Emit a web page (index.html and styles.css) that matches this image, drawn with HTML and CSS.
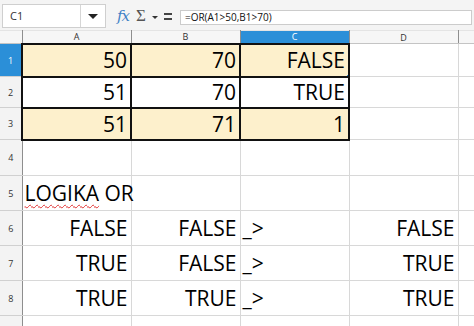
FILE: index.html
```html
<!DOCTYPE html>
<html>
<head>
<meta charset="utf-8">
<link rel="stylesheet" href="styles.css">
</head>
<body>
<div class="toolbar">
  <div class="namebox">
    <span class="name">C1</span>
    <span class="nb-drop"><span class="tri"></span></span>
  </div>
  <span class="fx">fx</span>
  <span class="sigma">Σ</span>
  <span class="tri tri-small"></span>
  <span class="eq"><i></i><i></i></span>
  <div class="formula">=OR(A1&gt;50,B1&gt;70)</div>
</div>
<table class="sheet">
  <colgroup>
    <col class="c-rh"><col class="c-col"><col class="c-col"><col class="c-col"><col class="c-col"><col class="c-rest">
  </colgroup>
  <tr class="hdr">
    <th class="corner"></th><th>A</th><th>B</th><th class="sel">C</th><th>D</th><th></th>
  </tr>
  <tr class="r1">
    <th class="rh sel">1</th><td class="b y num">50</td><td class="b y num">70</td><td class="b y num cur">FALSE</td><td></td><td></td>
  </tr>
  <tr class="r2">
    <th class="rh">2</th><td class="b num">51</td><td class="b num">70</td><td class="b num">TRUE</td><td></td><td></td>
  </tr>
  <tr class="r3">
    <th class="rh">3</th><td class="b y num">51</td><td class="b y num">71</td><td class="b y num">1</td><td></td><td></td>
  </tr>
  <tr class="r4">
    <th class="rh">4</th><td></td><td></td><td></td><td></td><td></td>
  </tr>
  <tr class="rn">
    <th class="rh">5</th><td class="txt over"><span class="sp">LOGIKA</span> OR</td><td></td><td></td><td></td><td></td>
  </tr>
  <tr class="rn">
    <th class="rh">6</th><td class="num">FALSE</td><td class="num">FALSE</td><td class="txt">_&gt;</td><td class="num">FALSE</td><td></td>
  </tr>
  <tr class="rn">
    <th class="rh">7</th><td class="num">TRUE</td><td class="num">FALSE</td><td class="txt">_&gt;</td><td class="num">TRUE</td><td></td>
  </tr>
  <tr class="rn">
    <th class="rh">8</th><td class="num">TRUE</td><td class="num">TRUE</td><td class="txt">_&gt;</td><td class="num">TRUE</td><td></td>
  </tr>
  <tr class="rn">
    <th class="rh"></th><td></td><td></td><td></td><td></td><td></td>
  </tr>
</table>
</body>
</html>
```
FILE: styles.css
```css
html, body {
  margin: 0;
  padding: 0;
  background: #ffffff;
  overflow: hidden;
  width: 474px;
  height: 326px;
}

body {
  font-family: "Open Sans", "Noto Sans", sans-serif;
  color: #000;
}

.toolbar {
  height: 30px;
  box-sizing: border-box;
  padding-top: 2px;
  display: flex;
  align-items: center;
  background: #f4f4f4;
}

.namebox {
  margin-left: 2px;
  width: 104px;
  height: 24px;
  box-sizing: border-box;
  border: 1px solid #cfcfcf;
  background: #fff;
  display: flex;
}

.name {
  width: 77px;
  box-sizing: border-box;
  padding-left: 7px;
  font-size: 11px;
  line-height: 22px;
  color: #333;
}

.nb-drop {
  flex: 1;
  border-left: 1px solid #d6d6d6;
  display: flex;
  align-items: center;
  justify-content: center;
}

.tri {
  width: 0;
  height: 0;
  border-left: 5px solid transparent;
  border-right: 5px solid transparent;
  border-top: 5px solid #222;
}

.tri-small {
  margin-left: 6px;
  margin-top: 2px;
  border-left-width: 3px;
  border-right-width: 3px;
  border-top-width: 3px;
  border-top-color: #333;
}

.fx {
  margin-left: 11px;
  font-family: "DejaVu Serif", "Liberation Serif", serif;
  font-style: italic;
  font-size: 15px;
  color: #3f82c6;
  letter-spacing: -1px;
}

.sigma {
  margin-left: 7px;
  font-family: "Liberation Serif", serif;
  font-size: 17px;
  color: #555;
}

.eq {
  margin-left: 6px;
  display: flex;
  flex-direction: column;
  gap: 3px;
}

.eq i {
  display: block;
  width: 8px;
  height: 2px;
  background: #444;
}

.formula {
  margin-left: 8px;
  margin-right: 2px;
  flex: 1;
  height: 15px;
  box-sizing: border-box;
  border: 1px solid #cccccc;
  background: #fff;
  font-size: 10px;
  line-height: 13px;
  padding-left: 4px;
  color: #111;
  margin-top: 3px;
}

.sheet {
  table-layout: fixed;
  border-collapse: collapse;
  width: 474px;
}

.c-rh { width: 22px; }
.c-col { width: 109px; }
.c-rest { width: 16px; }

.hdr { height: 13px; }
.hdr th {
  background: #f6f6f6;
  font-weight: normal;
  font-size: 9px;
  line-height: 11px;
  color: #333;
  padding: 0;
  border-right: 1px solid #8e8e8e;
  border-bottom: 1px solid #c4c4c4;
  border-top: 1px solid #e4e4e4;
}

.hdr th.sel {
  background: #2b8fd8;
  color: #fff;
}

.r1 { height: 33px; }
.r2 { height: 31px; }
.r3 { height: 32px; }
.r4 { height: 36px; }
.rn { height: 35px; }

th.rh {
  background: #f3f3f3;
  font-weight: normal;
  font-size: 9px;
  color: #333;
  padding: 0;
  border-right: 1px solid #8e8e8e;
  border-bottom: 1px solid #d0d0d0;
}

th.rh.sel {
  background: #2b8fd8;
  color: #fff;
}

td {
  border-right: 1px solid #d8d8d8;
  border-bottom: 1px solid #d8d8d8;
  padding: 0 3px 0 2px;
  font-size: 21px;
  line-height: 26px;
  white-space: nowrap;
  overflow: hidden;
  vertical-align: middle;
}

td.num { text-align: right; }
td.txt { text-align: left; }
td.over { overflow: visible; }

td.b {
  border: 2px solid #111;
}

td.y { background: #fdf0cc; }

td.cur { position: relative; }
td.cur::after {
  content: "";
  position: absolute;
  left: -1px;
  top: -1px;
  right: -1px;
  bottom: -1px;
  border: 1px solid #2a86d6;
}
td.cur::before {
  content: "";
  position: absolute;
  right: -3px;
  bottom: -3px;
  width: 4px;
  height: 4px;
  background: #2a86d6;
  z-index: 1;
}

.sp {
  text-decoration: underline wavy #e03030;
  text-decoration-thickness: 1px;
  text-underline-offset: 3px;
}
```
